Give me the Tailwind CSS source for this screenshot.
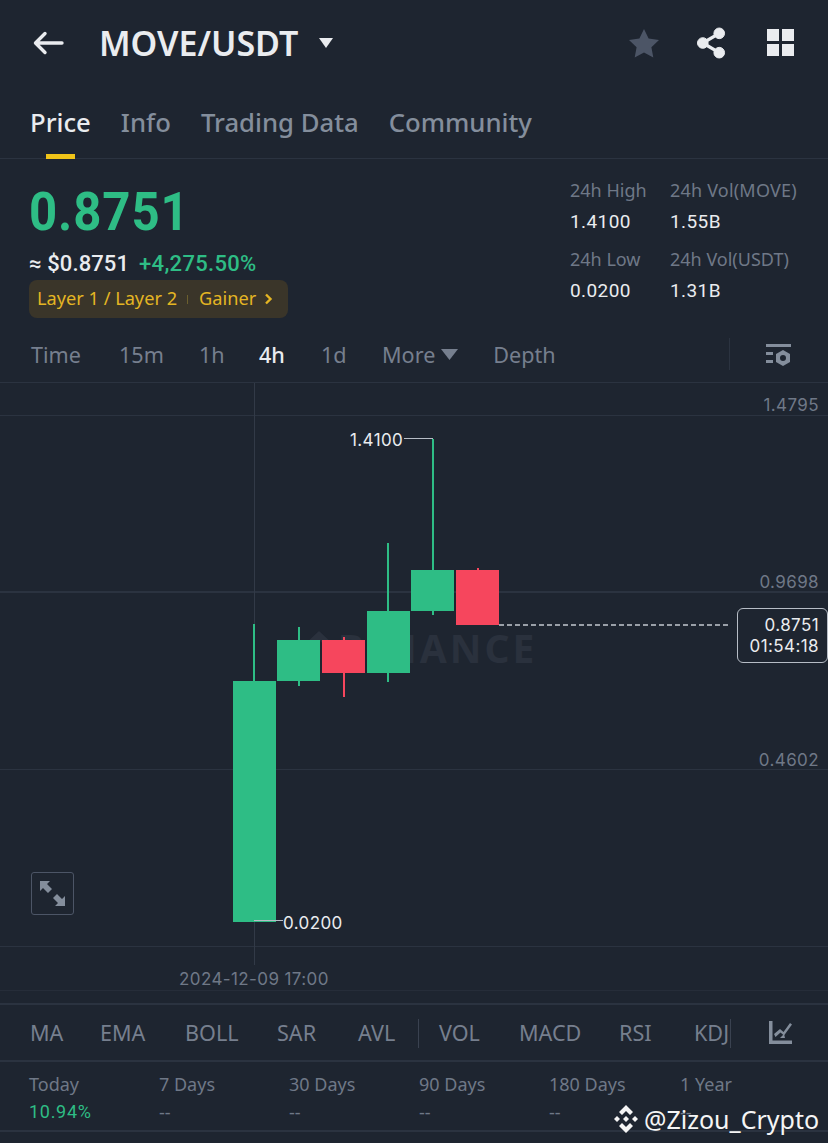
<!DOCTYPE html>
<html lang="en">
<head>
    <meta charset="UTF-8">
    <meta name="viewport" content="width=device-width, initial-scale=1.0">
    <title>MOVE/USDT</title>
    <script src="https://cdn.jsdelivr.net/npm/@tailwindcss/browser@4"></script>
</head>
<body class="bg-[#1e2530] font-['Noto_Sans',sans-serif] overflow-hidden">
<div class="w-[828px] h-[1143px] flex flex-col relative">

    <!-- header -->
    <div class="h-[85px] flex items-center pl-[33px] pr-[34px]">
        <svg class="w-[31px] h-[24px]" viewBox="0 0 31 24" fill="none" stroke="#eaecef" stroke-width="3.4" stroke-linecap="round" stroke-linejoin="round"><path d="M29 12H3M12 2.5L2.5 12L12 21.5"/></svg>
        <span class="ml-[35px] text-[34px] font-semibold text-[#eaecef] leading-none">MOVE/USDT</span>
        <svg class="ml-[20px] w-[16px] h-[12px]" viewBox="0 0 16 12" fill="#eaecef"><path d="M1 1h14L8 11z"/></svg>
        <div class="ml-auto flex items-center">
            <svg class="w-[32px] h-[30px]" viewBox="0 0 32 30" fill="#4c5566"><path d="M16 1l4.6 9.6 10.4 1.4-7.6 7.2 1.9 10.3L16 24.6l-9.3 4.9 1.9-10.3L1 12l10.4-1.4z"/></svg>
            <svg class="ml-[37px] w-[29px] h-[32px]" viewBox="0 0 30 32" fill="#eaecef" stroke="#eaecef"><circle cx="6" cy="16" r="5.5"/><circle cx="23" cy="6" r="5.5"/><circle cx="23" cy="26" r="5.5"/><path stroke-width="3.4" d="M6 16L23 6M6 16l17 10"/></svg>
            <div class="ml-[41px] grid grid-cols-2 gap-[3px] w-[27px]">
                <div class="h-[12px] bg-[#eaecef]"></div><div class="h-[12px] bg-[#eaecef]"></div>
                <div class="h-[12px] bg-[#eaecef]"></div><div class="h-[12px] bg-[#eaecef]"></div>
            </div>
        </div>
    </div>

    <!-- tabs -->
    <div class="h-[74px] border-b border-[#2b3340] pl-[30px] flex gap-[30px] text-[25.7px] text-[#848e9c] pt-[17px] leading-[42px] font-medium">
        <div class="relative text-[#eaecef]">Price<div class="absolute left-[16px] top-[52px] w-[29px] h-[5px] bg-[#f0c419]"></div></div>
        <div>Info</div>
        <div>Trading Data</div>
        <div>Community</div>
    </div>

    <!-- price block -->
    <div class="h-[179px] flex justify-between pl-[29px] pr-[30px]">
        <div>
            <div class="mt-[20px] text-[54px] leading-[66px] font-bold text-[#2ebd85] font-['Roboto',sans-serif] tracking-[1px] scale-x-[0.91] origin-left">0.8751</div>
            <div class="mt-[4px] flex text-[22px] leading-[30px] font-['Roboto',sans-serif] font-medium">
                <span class="text-[#eaecef] tracking-[0.1px]">≈ $0.8751</span>
                <span class="ml-[10px] text-[#2ebd85] tracking-[0.3px]">+4,275.50%</span>
            </div>
            <div class="mt-[1px] w-[259px] h-[38px] rounded-[8px] bg-[#3a3529] flex items-center pl-[8px] text-[18.2px] text-[#e4b523]">
                <span>Layer 1 / Layer 2</span>
                <span class="ml-[10px] w-px h-[9px] bg-[#6b5f2e]"></span>
                <span class="ml-[11px]">Gainer</span>
                <svg class="ml-[8px] w-[9px] h-[12px]" viewBox="0 0 9 12" fill="none" stroke="#e4b523" stroke-width="2.4"><path d="M2 1.5L6.5 6L2 10.5"/></svg>
            </div>
        </div>
        <div class="flex gap-[25px] mt-[17px] text-[18px] leading-[28px] whitespace-nowrap">
            <div class="w-[75px]">
                <div class="text-[#6f7887]">24h High</div>
                <div class="mt-[4px] text-[#eaecef] font-['Roboto',sans-serif] text-[19px] tracking-[0.4px]">1.4100</div>
                <div class="mt-[9px] text-[#6f7887]">24h Low</div>
                <div class="mt-[4px] text-[#eaecef] font-['Roboto',sans-serif] text-[19px] tracking-[0.4px]">0.0200</div>
            </div>
            <div class="w-[128px]">
                <div class="text-[#6f7887] tracking-[0.2px]">24h Vol(MOVE)</div>
                <div class="mt-[4px] text-[#eaecef] font-['Roboto',sans-serif] text-[19px] tracking-[0.4px]">1.55B</div>
                <div class="mt-[9px] text-[#6f7887]">24h Vol(USDT)</div>
                <div class="mt-[4px] text-[#eaecef] font-['Roboto',sans-serif] text-[19px] tracking-[0.4px]">1.31B</div>
            </div>
        </div>
    </div>

    <!-- timeframes -->
    <div class="h-[45px] border-b border-[#2b3340] flex items-start pl-[31px] text-[21.6px] leading-[33px] text-[#767f8e]">
        <span class="w-[88px]">Time</span>
        <span class="w-[80px]">15m</span>
        <span class="w-[60px]">1h</span>
        <span class="w-[62px] text-[#eaecef] font-medium">4h</span>
        <span class="w-[61px]">1d</span>
        <span class="flex items-center">More<svg class="ml-[6px] w-[17px] h-[11px]" viewBox="0 0 17 11" fill="#767f8e"><path d="M0 0h17L8.5 11z"/></svg></span>
        <span class="ml-[35px]">Depth</span>
        <div class="ml-[173px] w-px h-[32px] bg-[#2b3340]"></div>
        <svg class="ml-[36px] mt-[5px] w-[25px] h-[25px]" viewBox="0 0 25 25" fill="#848e9c"><rect x="0" y="1" width="25" height="3"/><rect x="0" y="9" width="7" height="3"/><rect x="0" y="17" width="7" height="3"/><path fill-rule="evenodd" d="M17 7l7 4v8l-7 4-7-4v-8zM17 12a3 3 0 1 0 0 6 3 3 0 0 0 0-6z"/></svg>
    </div>

    <!-- chart canvas -->
    <div class="h-[620px] relative font-['Inter',sans-serif] tracking-[0.4px]">
        <div class="absolute left-0 right-0 top-[32px] h-px bg-[#2b3340]"></div>
        <div class="absolute left-0 right-0 top-[208px] h-[2px] bg-[#2b3340]"></div>
        <div class="absolute left-0 right-0 top-[386px] h-px bg-[#2b3340]"></div>
        <div class="absolute left-0 right-0 top-[563px] h-px bg-[#2b3340]"></div>
        <div class="absolute left-0 right-0 top-[607px] h-px bg-[#262d39]"></div>
        <div class="absolute left-[254px] top-0 w-px h-[582px] bg-[#323a47]"></div>

        <!-- watermark -->
        <div class="absolute left-[304px] top-[245px] flex items-center text-[39px] leading-[40px] font-bold text-[#2a313d] tracking-[3px] font-['Noto_Sans',sans-serif]">
            <svg class="w-[30px] h-[22px] mb-[12px] mr-[4px]" viewBox="0 0 30 22" fill="#2a313d"><path d="M15 0l15 14-5 4-10-9-10 9-5-4z"/></svg>
            <span>BINANCE</span>
        </div>

        <!-- axis prices -->
        <div class="absolute right-[9px] top-[11px] text-[17px] leading-[22px] text-[#6f7887]">1.4795</div>
        <div class="absolute right-[9px] top-[188px] text-[17px] leading-[22px] text-[#6f7887]">0.9698</div>
        <div class="absolute right-[9px] top-[366px] text-[17px] leading-[22px] text-[#6f7887]">0.4602</div>

        <!-- wicks -->
        <div class="absolute left-[253px] top-[241px] w-[2px] h-[57px] bg-[#2ebd85]"></div>
        <div class="absolute left-[298px] top-[244px] w-[2px] h-[59px] bg-[#2ebd85]"></div>
        <div class="absolute left-[343px] top-[254px] w-[2px] h-[60px] bg-[#f6465d]"></div>
        <div class="absolute left-[387px] top-[160px] w-[2px] h-[139px] bg-[#2ebd85]"></div>
        <div class="absolute left-[432px] top-[56px] w-[2px] h-[176px] bg-[#2ebd85]"></div>
        <div class="absolute left-[477px] top-[185px] w-[2px] h-[4px] bg-[#f6465d]"></div>

        <!-- candles -->
        <div class="absolute left-[233px] top-[298px] w-[43px] h-[241px] bg-[#2ebd85]"></div>
        <div class="absolute left-[277px] top-[257px] w-[43px] h-[41px] bg-[#2ebd85]"></div>
        <div class="absolute left-[322px] top-[257px] w-[43px] h-[33px] bg-[#f6465d]"></div>
        <div class="absolute left-[367px] top-[228px] w-[43px] h-[62px] bg-[#2ebd85]"></div>
        <div class="absolute left-[411px] top-[187px] w-[43px] h-[41px] bg-[#2ebd85]"></div>
        <div class="absolute left-[456px] top-[187px] w-[43px] h-[55px] bg-[#f6465d]"></div>

        <!-- high / low labels -->
        <div class="absolute left-[350px] top-[46px] text-[17px] leading-[22px] text-[#eaecef]">1.4100</div>
        <div class="absolute left-[404px] top-[55px] w-[29px] h-px bg-[#b7bdc6]"></div>
        <div class="absolute left-[254px] top-[537px] w-[29px] h-px bg-[#b7bdc6]"></div>
        <div class="absolute left-[283px] top-[529px] text-[17px] leading-[22px] text-[#eaecef]">0.0200</div>

        <!-- last price -->
        <svg class="absolute left-[499px] top-[241px] w-[230px] h-[2px]" viewBox="0 0 230 2"><line x1="0" y1="1" x2="230" y2="1" stroke="#c4c9d0" stroke-width="1.4" stroke-dasharray="5 3"/></svg>
        <div class="absolute left-[737px] top-[225px] w-[91px] h-[55px] rounded-[6px] border border-[#b7bdc6] bg-[#1e2530] pr-[8px] pt-[6px] text-right text-[17px] leading-[21px] text-[#eaecef]">0.8751<br>01:54:18</div>

        <!-- expand button -->
        <div class="absolute left-[31px] top-[489px] w-[43px] h-[43px] rounded-[3px] border border-[#4c5566] flex items-center justify-center">
            <svg class="w-[25px] h-[25px]" viewBox="0 0 25 25" fill="#848e9c"><path d="M0 0h10L7 3l5 5-4 4-5-5-3 3z"/><path d="M25 25H15l3-3-5-5 4-4 5 5 3-3z"/></svg>
        </div>

        <div class="absolute left-[179px] top-[585px] text-[17px] leading-[22px] text-[#6f7887]">2024-12-09 17:00</div>
    </div>

    <!-- indicators -->
    <div class="h-[59px] border-t-2 border-b-2 border-[#2b3340] flex items-center pl-[30px] pt-[2px] text-[21.6px] text-[#767f8e]">
        <span class="w-[70px]">MA</span>
        <span class="w-[85px]">EMA</span>
        <span class="w-[92px]">BOLL</span>
        <span class="w-[81px]">SAR</span>
        <span class="w-[60px]">AVL</span>
        <span class="w-px h-[29px] bg-[#3a4250]"></span>
        <span class="ml-[20px] w-[80px]">VOL</span>
        <span class="w-[100px]">MACD</span>
        <span class="w-[75px]">RSI</span>
        <span class="w-[36px] overflow-hidden">KDJ</span>
        <span class="w-px h-[29px] bg-[#3a4250]"></span>
        <svg class="ml-[38px] mb-[2px] w-[23px] h-[23px]" viewBox="0 0 23 23" fill="#848e9c"><path d="M0 0h3.5v19.5H23V23H0z"/><path d="M5 13l6-5 3.5 3L21 2l2 1.5-8 11-3.5-3-5 4.5z"/><path d="M11 17l4-4 1 4z"/></svg>
    </div>

    <!-- returns -->
    <div class="h-[70px] border-b-2 border-[#2b3340] pl-[29px] flex pt-[8px] text-[18px] leading-[28px] text-[#6f7887]">
        <div class="w-[130px]">Today<div class="text-[#2ebd85] font-['Roboto',sans-serif] tracking-[0.7px]">10.94%</div></div>
        <div class="w-[130px]">7 Days<div>--</div></div>
        <div class="w-[130px]">30 Days<div>--</div></div>
        <div class="w-[130px]">90 Days<div>--</div></div>
        <div class="w-[131px]">180 Days<div>--</div></div>
        <div>1 Year<div>--</div></div>
    </div>

    <!-- watermark -->
    <div class="absolute left-[612px] top-[1103px] flex items-center text-[#f5f5f5] text-[25px] leading-[32px]">
        <svg class="w-[28px] h-[30px] mr-[4px]" viewBox="0 0 28 30" fill="#f5f5f5"><path d="M14 1l7 7-3 3-4-4-4 4-3-3z"/><path d="M14 29l-7-7 3-3 4 4 4-4 3 3z"/><path d="M2 15l3-3 3 3-3 3z"/><path d="M20 15l3-3 3 3-3 3z"/><path d="M14 12l3 3-3 3-3-3z"/></svg>
        <span>@Zizou_Crypto</span>
    </div>
</div>
</body>
</html>
